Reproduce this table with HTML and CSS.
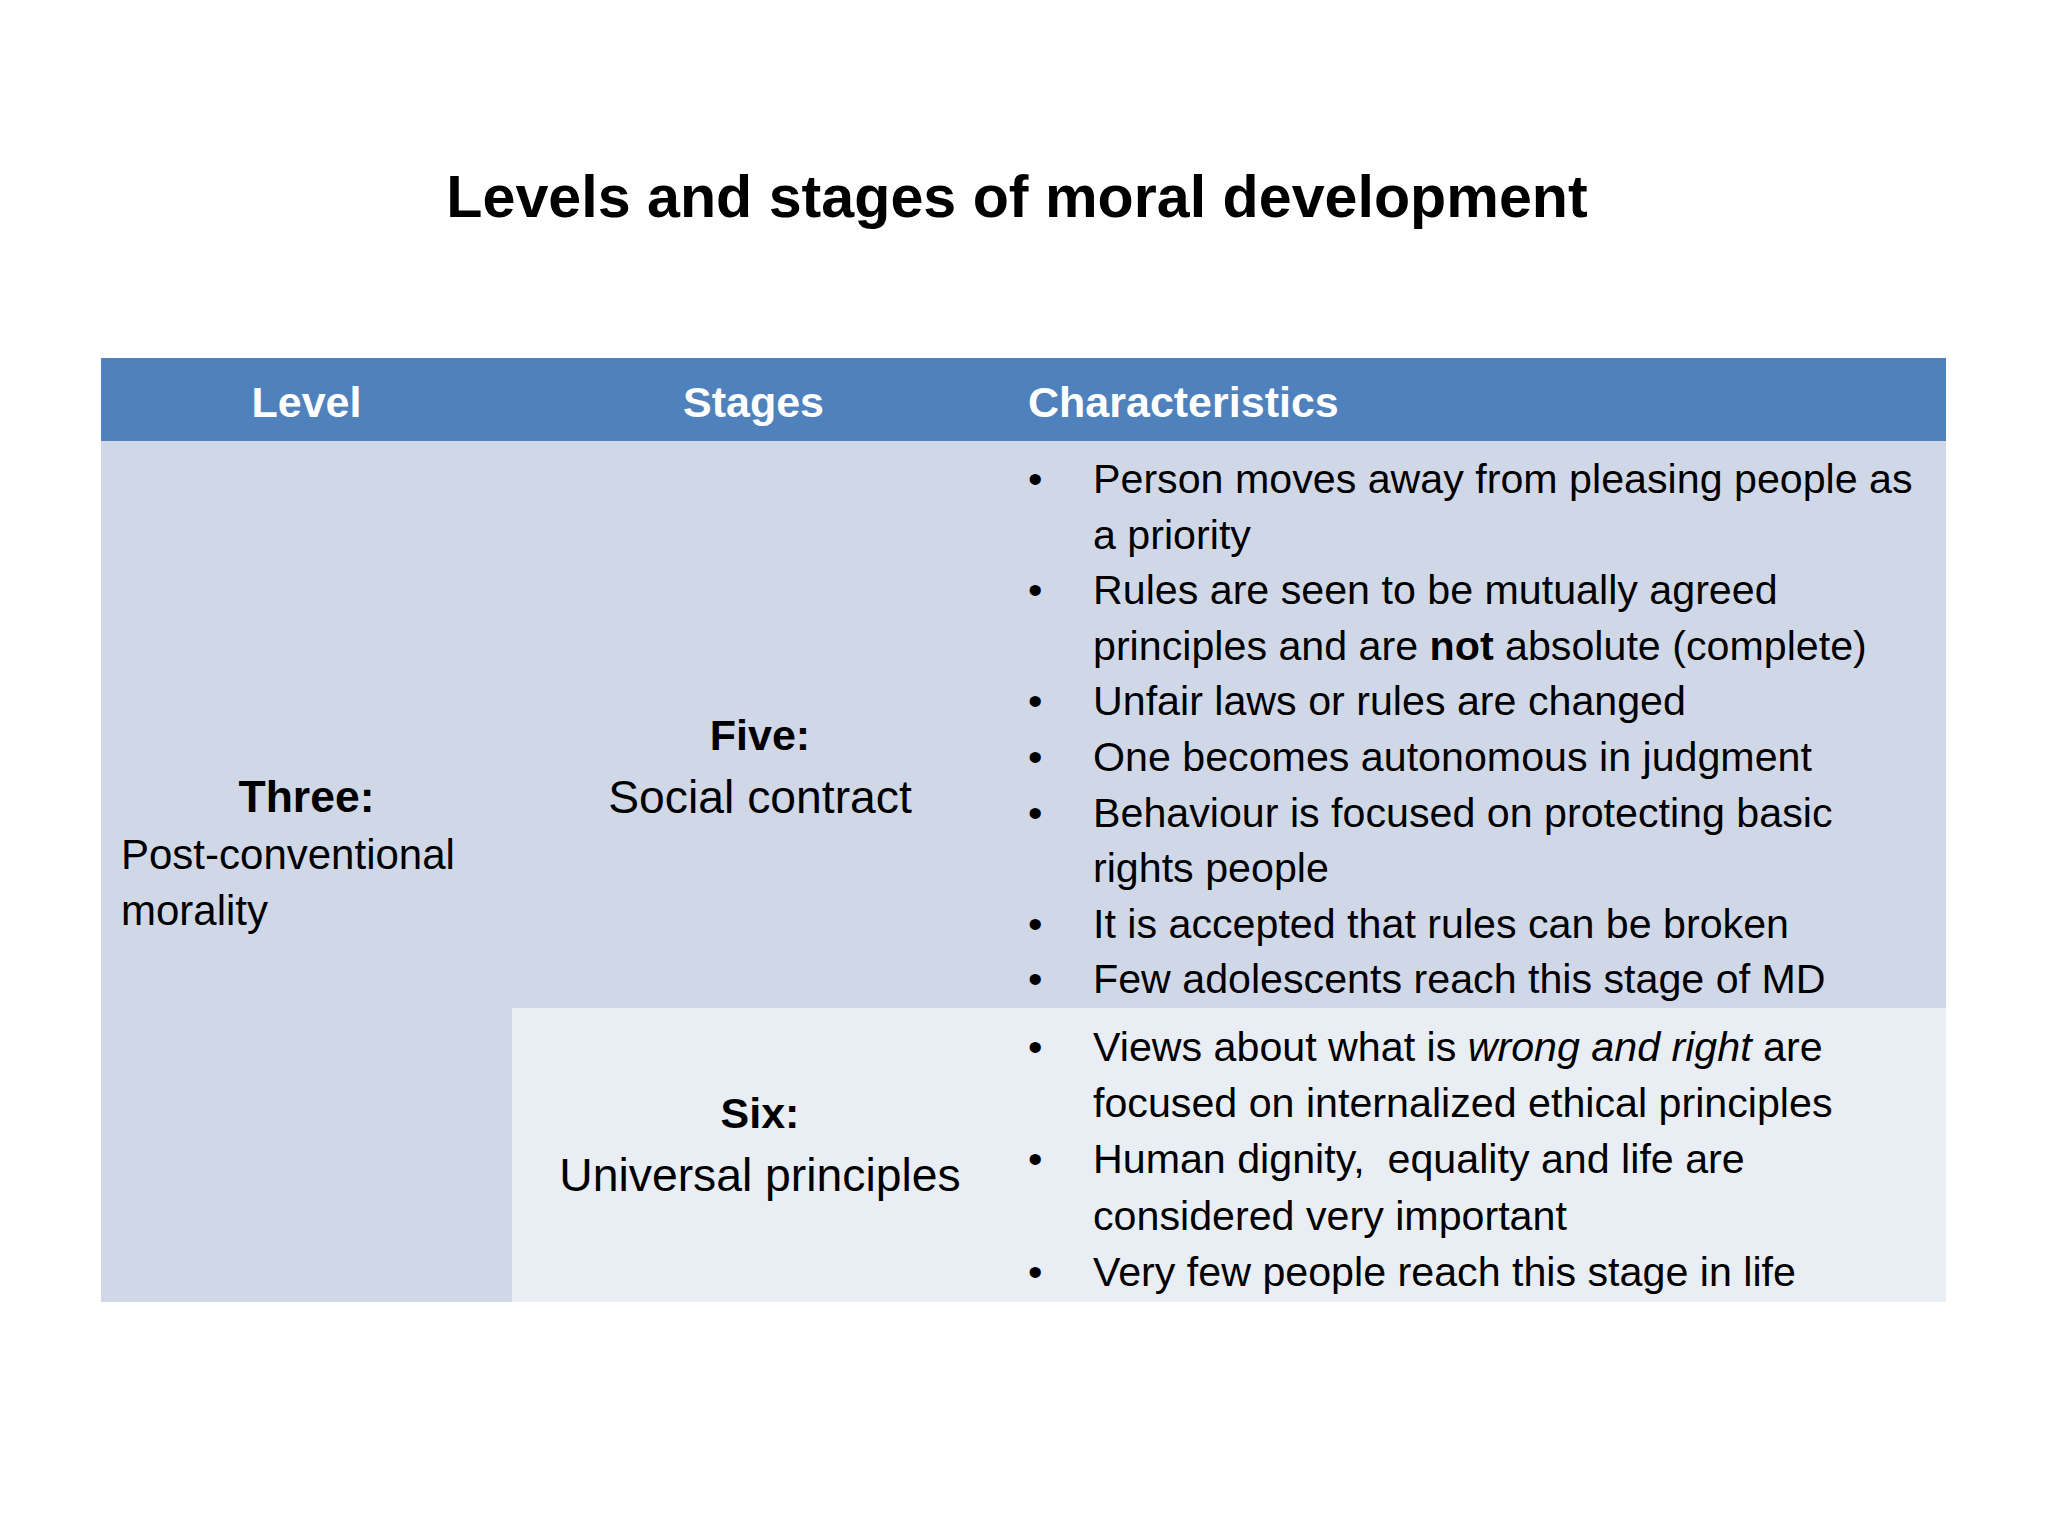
FILE: index.html
```html
<!DOCTYPE html>
<html lang="en">
<head>
<meta charset="utf-8">
<title>Levels and stages of moral development</title>
<link rel="stylesheet" href="styles.css">
</head>
<body>
<main class="slide">
  <h1 class="title">Levels and stages of moral development</h1>
  <div class="table">
    <div class="cell head head-level">Level</div>
    <div class="cell head head-stages">Stages</div>
    <div class="cell head head-chars">Characteristics</div>

    <div class="cell level">
      <p class="level-name">Three:</p>
      <p class="level-desc">Post-conventional<br>morality</p>
    </div>

    <div class="cell stage stage-five">
      <p class="stage-name">Five:</p>
      <p class="stage-desc">Social contract</p>
    </div>
    <div class="cell chars chars-five">
      <ul class="bullets">
        <li><span class="txt">Person moves away from pleasing people as<br>a priority</span></li>
        <li><span class="txt">Rules are seen to be mutually agreed<br>principles and are <b>not</b> absolute (complete)</span></li>
        <li><span class="txt">Unfair laws or rules are changed</span></li>
        <li><span class="txt">One becomes autonomous in judgment</span></li>
        <li><span class="txt">Behaviour is focused on protecting basic<br>rights people</span></li>
        <li><span class="txt">It is accepted that rules can be broken</span></li>
        <li><span class="txt">Few adolescents reach this stage of MD</span></li>
      </ul>
    </div>

    <div class="cell stage stage-six">
      <p class="stage-name">Six:</p>
      <p class="stage-desc">Universal principles</p>
    </div>
    <div class="cell chars chars-six">
      <ul class="bullets">
        <li><span class="txt">Views about what is <i>wrong and right</i> are<br>focused on internalized ethical principles</span></li>
        <li><span class="txt">Human dignity,&nbsp; equality and life are<br>considered very important</span></li>
        <li><span class="txt">Very few people reach this stage in life</span></li>
      </ul>
    </div>
  </div>
</main>
</body>
</html>
```

FILE: styles.css
```css
html, body {
  margin: 0;
  padding: 0;
  background: #ffffff;
}

body {
  font-family: "Liberation Sans", Arial, sans-serif;
  color: #000000;
}

.slide {
  width: 2048px;
  height: 1536px;
  box-sizing: border-box;
  padding-top: 162px;
  overflow: hidden;
}

.title {
  margin: 0;
  padding-right: 14px;
  font-size: 59.2px;
  line-height: 70px;
  font-weight: 700;
  text-align: center;
}

.table {
  display: grid;
  grid-template-columns: 411px 496px 938px;
  width: 1845px;
  margin: 126px 0 0 101px;
}

.cell {
  box-sizing: border-box;
}

.head {
  height: 83px;
  padding-top: 6px;
  line-height: 77px;
  font-size: 43px;
  font-weight: 700;
  color: #ffffff;
  background: #4f81bd;
}

.head-level {
  text-align: center;
}

.head-stages {
  text-align: center;
  padding-right: 13px;
}

.head-chars {
  padding-left: 20px;
}

.level {
  grid-row: span 2;
  background: #d0d8e8;
  display: flex;
  flex-direction: column;
  justify-content: center;
  padding: 0 20px 37px;
}

.level-name {
  margin: 0;
  font-size: 44.5px;
  line-height: 60px;
  font-weight: 700;
  text-align: center;
}

.level-desc {
  margin: 0;
  font-size: 42px;
  line-height: 55.6px;
}

.stage {
  display: flex;
  flex-direction: column;
  justify-content: center;
  align-items: center;
  text-align: center;
}

.stage-five {
  background: #d0d8e8;
  padding-top: 83px;
}

.stage-six {
  background: #e9edf4;
  padding-bottom: 22px;
}

.stage-name {
  margin: 0;
  font-size: 43px;
  line-height: 62px;
  font-weight: 700;
}

.stage-desc {
  margin: 0;
  font-size: 46.3px;
  line-height: 62px;
}

.chars {
  padding: 11px 20px 0;
}

.chars-five {
  background: #d0d8e8;
}

.chars-six {
  background: #e9edf4;
  padding: 11px 20px 2px;
}

.bullets {
  list-style: none;
  margin: 0;
  padding: 0;
  font-size: 41.2px;
  line-height: 55.6px;
}

.chars-six .bullets {
  line-height: 56.2px;
}

.bullets li {
  display: flex;
}

.bullets li::before {
  content: "\2022";
  flex: 0 0 65px;
}

.txt {
  white-space: nowrap;
}
```
